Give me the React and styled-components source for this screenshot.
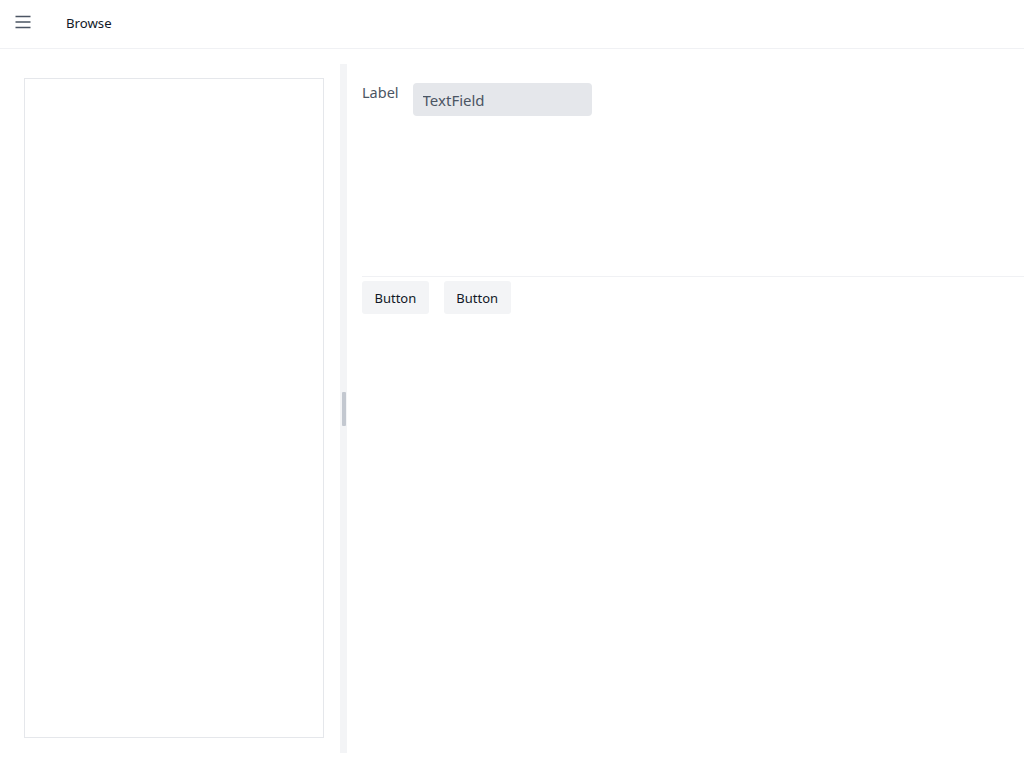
import styled, { createGlobalStyle } from 'styled-components';

const GlobalStyle = createGlobalStyle`
  html, body {
    margin: 0;
    padding: 0;
    background: #ffffff;
  }
  body {
    font-family: "Noto Sans", "Open Sans", sans-serif;
    color: #1f2937;
  }
`;

function App() {
  return (
    <>
      <GlobalStyle />
      <Page>
        <TopBar>
          <MenuButton aria-label="menu">
            <MenuIcon />
          </MenuButton>
          <Title>Browse</Title>
        </TopBar>
        <Body>
          <LeftPane>
            <TreeBox />
          </LeftPane>
          <Splitter>
            <Grip />
          </Splitter>
          <RightPane>
            <FormArea>
              <FieldRow>
                <FieldLabel>Label</FieldLabel>
                <TextField defaultValue="TextField" />
              </FieldRow>
            </FormArea>
            <ActionBar>
              <ActionButton>Button</ActionButton>
              <ActionButton>Button</ActionButton>
            </ActionBar>
          </RightPane>
        </Body>
      </Page>
    </>
  );
}

export default App;

function MenuIcon() {
  return (
    <svg width="16" height="14" viewBox="0 0 16 14" fill="none">
      <path d="M0.5 1.5h15M0.5 7h15M0.5 12.5h15" stroke="#4b5563" strokeWidth="1.6" />
    </svg>
  );
}

const Page = styled.div`
  width: 1024px;
  height: 765px;
  display: flex;
  flex-direction: column;
`;

const TopBar = styled.header`
  height: 49px;
  box-sizing: border-box;
  border-bottom: 1px solid #f0f1f4;
  display: flex;
  align-items: center;
  padding-left: 15px;
`;

const MenuButton = styled.button`
  background: transparent;
  border: 0;
  padding: 0;
  width: 16px;
  height: 14px;
  display: flex;
  margin-top: -4px;
  cursor: pointer;
`;

const Title = styled.span`
  margin-left: 35px;
  margin-top: -3px;
  font-size: 13.2px;
  color: #111827;
`;

const Body = styled.div`
  flex: 1;
  display: flex;
  padding: 15px 0 12px 0;
  min-height: 0;
`;

const LeftPane = styled.div`
  width: 340px;
  box-sizing: border-box;
  padding: 14px 16px 15px 24px;
  display: flex;
`;

const TreeBox = styled.div`
  flex: 1;
  border: 1px solid #e5e7eb;
`;

const Splitter = styled.div`
  width: 7px;
  background: #f3f4f6;
  display: flex;
  align-items: center;
  justify-content: center;
`;

const Grip = styled.div`
  width: 4px;
  height: 34px;
  background: #c3c8d0;
  border-radius: 1px;
`;

const RightPane = styled.div`
  flex: 1;
  padding-left: 15px;
  display: flex;
  flex-direction: column;
`;

const FormArea = styled.div`
  height: 213px;
  box-sizing: border-box;
  padding-top: 19px;
  border-bottom: 1px solid #f0f1f4;
`;

const FieldRow = styled.div`
  display: flex;
  align-items: flex-start;
  gap: 14px;
`;

const FieldLabel = styled.label`
  font-size: 14.5px;
  color: #4b5563;
  line-height: 18px;
`;

const TextField = styled.input`
  width: 179px;
  height: 33px;
  box-sizing: border-box;
  border: 0;
  outline: none;
  border-radius: 4px;
  background: #e5e7eb;
  padding: 0 10px;
  font-family: "Noto Sans", "Open Sans", sans-serif;
  font-size: 15px;
  color: #4b5563;
`;

const ActionBar = styled.div`
  display: flex;
  gap: 15px;
  padding-top: 4px;
`;

const ActionButton = styled.button`
  height: 33px;
  padding: 0 12.5px;
  border: 0;
  border-radius: 3px;
  background: #f3f4f6;
  font-family: "Noto Sans", "Open Sans", sans-serif;
  font-size: 13px;
  color: #111827;
  cursor: pointer;
`;
